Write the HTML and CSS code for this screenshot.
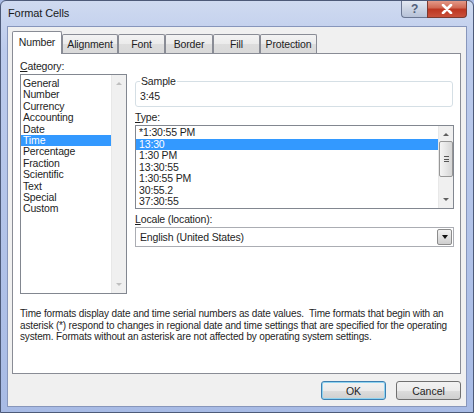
FILE: index.html
```html
<!DOCTYPE html>
<html lang="en">
  <head>
    <meta charset="UTF-8" />
    <title>Format Cells</title>
    <link rel="stylesheet" href="styles.css">
  </head>
  <body>
    <div class="window">
      <div class="titlebar">
        <span class="title">Format Cells</span>
        <div class="caption-btns">
          <div class="cap-btn help">?</div>
          <div class="cap-btn close">
            <svg width="12" height="10" viewBox="0 0 12 10">
              <path d="M2 1 L10 9 M10 1 L2 9" stroke="#fff" stroke-width="2.6" stroke-linecap="round" />
            </svg>
          </div>
        </div>
      </div>

      <div class="client">
        <div class="tabs">
          <div class="tab active" style="width: 50px">Number</div>
          <div class="tab" style="width: 56px">Alignment</div>
          <div class="tab" style="width: 47px">Font</div>
          <div class="tab" style="width: 48px">Border</div>
          <div class="tab" style="width: 47px">Fill</div>
          <div class="tab" style="width: 57px">Protection</div>
        </div>

        <div class="panel">
          <div class="columns">
            <div class="left-col">
              <div class="label"><u>C</u>ategory:</div>
              <div class="listbox category-list">
                <div class="items">
                  <div class="item">General</div>
                  <div class="item">Number</div>
                  <div class="item">Currency</div>
                  <div class="item">Accounting</div>
                  <div class="item">Date</div>
                  <div class="item selected">Time</div>
                  <div class="item">Percentage</div>
                  <div class="item">Fraction</div>
                  <div class="item">Scientific</div>
                  <div class="item">Text</div>
                  <div class="item">Special</div>
                  <div class="item">Custom</div>
                </div>
                <div class="scrollbar disabled">
                  <span class="arrow up"></span>
                  <span class="arrow down"></span>
                </div>
              </div>
            </div>

            <div class="right-col">
              <fieldset class="sample">
                <legend>Sample</legend>
                <div class="sample-value">3:45</div>
              </fieldset>

              <div class="label type-label"><u>T</u>ype:</div>
              <div class="listbox type-list">
                <div class="items">
                  <div class="item">*1:30:55 PM</div>
                  <div class="item selected">13:30</div>
                  <div class="item">1:30 PM</div>
                  <div class="item">13:30:55</div>
                  <div class="item">1:30:55 PM</div>
                  <div class="item">30:55.2</div>
                  <div class="item">37:30:55</div>
                </div>
                <div class="scrollbar">
                  <span class="arrow up"></span>
                  <div class="thumb">
                    <span class="grip"></span>
                  </div>
                  <span class="arrow down"></span>
                </div>
              </div>

              <div class="label locale-label"><u>L</u>ocale (location):</div>
              <div class="combo">
                <span class="combo-text">English (United States)</span>
                <span class="combo-btn"><span class="arrow down dark"></span></span>
              </div>
            </div>
          </div>

          <div class="description">
            Time formats display date and time serial numbers as date values.&nbsp; Time formats that begin with an<br />
            asterisk (*) respond to changes in regional date and time settings that are specified for the operating<br />
            system. Formats without an asterisk are not affected by operating system settings.
          </div>
        </div>

        <div class="buttons">
          <button class="btn default">OK</button>
          <button class="btn">Cancel</button>
        </div>
      </div>
    </div>
  </body>
</html>
```

FILE: styles.css
```css
* {
  box-sizing: border-box;
}

body {
  margin: 0;
  font-family: "Liberation Sans", Arial, sans-serif;
  font-size: 10.5px;
  letter-spacing: -0.15px;
  color: #1e1e1e;
  background: #a9bbe4;
}

.window {
  width: 474px;
  height: 413px;
  background: linear-gradient(180deg, #cfdaf0 0%, #bccbec 12%, #a8bbe5 100%);
  border: 1px solid #4d5a78;
  border-radius: 6px 6px 0 0;
  overflow: hidden;
}

.titlebar {
  height: 25px;
  display: flex;
  align-items: flex-start;
  padding-left: 7px;
}

.title {
  font-size: 11px;
  letter-spacing: -0.1px;
  color: #1a1a1a;
  margin-top: 6px;
}

.caption-btns {
  margin-left: auto;
  margin-right: 6px;
  display: flex;
  margin-top: -1px;
}

.cap-btn {
  height: 18px;
  display: flex;
  align-items: center;
  justify-content: center;
  border: 1px solid #6a7691;
  border-top: none;
}

.help {
  width: 26px;
  border-radius: 0 0 0 4px;
  background: linear-gradient(180deg, #e6ebf4 0%, #cdd5e4 50%, #b7c2d8 100%);
  color: #53607a;
  font-weight: bold;
  font-size: 12px;
  border-right: none;
}

.close {
  width: 40px;
  border-radius: 0 0 4px 0;
  background: linear-gradient(180deg, #e7a08f 0%, #d16a55 45%, #bd3722 55%, #c9513c 100%);
  border-color: #7b3a30;
}

.client {
  margin: 0 6px;
  height: 381px;
  background: #f0f0f0;
  border: 1px solid #8796bb;
  padding: 4px 5px 0 4px;
}

.tabs {
  display: flex;
  align-items: flex-end;
  height: 22px;
  position: relative;
  z-index: 1;
}

.tab {
  height: 19px;
  border: 1px solid #898c95;
  border-bottom: none;
  background: linear-gradient(180deg, #f3f3f3 0%, #ebebeb 50%, #dddddd 51%, #d9d9d9 100%);
  display: flex;
  align-items: center;
  justify-content: center;
  padding-bottom: 1px;
  border-radius: 2px 2px 0 0;
}

.tab.active {
  height: 23px;
  background: #fff;
  margin-bottom: -1px;
  padding-bottom: 2px;
}

.panel {
  height: 321px;
  background: #fff;
  border: 1px solid #898c95;
  padding: 6px 6px 0 7px;
}

.columns {
  display: flex;
  gap: 8px;
}

.left-col {
  width: 107px;
}

.right-col {
  flex: 1;
  padding-top: 15px;
}

.label {
  height: 13px;
  line-height: 13px;
  margin-bottom: 1px;
}

.listbox {
  display: flex;
  border: 1px solid #828790;
  background: #fff;
}

.category-list {
  height: 220px;
}

.type-list {
  height: 84px;
}

.items {
  flex: 1;
  padding-top: 3px;
}

.item {
  height: 11.4px;
  line-height: 11.4px;
  padding-left: 2px;
  white-space: nowrap;
}

.type-list .items {
  padding-top: 1px;
}

.type-list .item {
  height: 11.5px;
  line-height: 11.5px;
  padding-left: 3px;
}

.item.selected {
  background: #3399ff;
  color: #fff;
}

.scrollbar {
  width: 15px;
  background: #f0f0f0;
  border-left: 1px solid #e8e8e8;
  display: flex;
  flex-direction: column;
  align-items: center;
  padding: 7px 0;
}

.arrow {
  width: 0;
  height: 0;
  border-left: 3px solid transparent;
  border-right: 3px solid transparent;
}

.arrow.up {
  border-bottom: 3px solid #606060;
}

.arrow.down {
  border-top: 3px solid #606060;
  margin-top: auto;
}

.scrollbar.disabled .arrow.up {
  border-bottom-color: #bfbfbf;
}

.scrollbar.disabled .arrow.down {
  border-top-color: #bfbfbf;
}

.thumb {
  width: 14px;
  height: 36px;
  margin-top: 5px;
  border: 1px solid #979797;
  border-radius: 2px;
  background: linear-gradient(90deg, #f4f4f4 0%, #e6e6e6 50%, #d6d6d6 100%);
  display: flex;
  align-items: center;
  justify-content: center;
}

.grip {
  width: 5px;
  height: 6px;
  border-top: 1px solid #555;
  border-bottom: 1px solid #555;
  position: relative;
}

.grip::after {
  content: "";
  position: absolute;
  left: 0;
  right: 0;
  top: 1.5px;
  border-top: 1px solid #555;
}

.sample {
  margin: 0 1px 0 0;
  padding: 3px 4px 2px 4px;
  border: 1px solid #d5dfe5;
  border-radius: 3px;
  height: 32px;
}

.sample legend {
  padding: 0 1px;
  margin-left: 0;
  line-height: 12px;
}

.sample-value {
  line-height: 12px;
}

.type-label {
  margin-top: 4px;
}

.locale-label {
  margin-top: 4px;
}

.combo {
  height: 20px;
  border: 1px solid #abadb3;
  display: flex;
  align-items: center;
  padding: 1px;
}

.combo-text {
  flex: 1;
  padding-left: 3px;
}

.combo-btn {
  width: 15px;
  height: 16px;
  border: 1px solid #8c8c8c;
  border-radius: 2px;
  background: linear-gradient(180deg, #f2f2f2 0%, #e0e0e0 50%, #cfcfcf 100%);
  display: flex;
  align-items: center;
  justify-content: center;
}

.arrow.down.dark {
  margin-top: 0;
  border-left-width: 3.5px;
  border-right-width: 3.5px;
  border-top: 4px solid #111;
}

.description {
  margin-top: 14px;
  font-size: 10px;
  line-height: 11.6px;
  white-space: nowrap;
}

.buttons {
  display: flex;
  justify-content: flex-end;
  gap: 10px;
  margin-top: 7px;
}

.btn {
  width: 65px;
  height: 19px;
  font-family: "Liberation Sans", Arial, sans-serif;
  font-size: 10.5px;
  color: #1e1e1e;
  border: 1px solid #707070;
  border-radius: 3px;
  background: linear-gradient(180deg, #f2f2f2 0%, #ebebeb 50%, #dddddd 51%, #cfcfcf 100%);
  padding: 0;
}

.btn.default {
  border-color: #3c7fb1;
  box-shadow: inset 0 0 0 1px #8fd3f0;
}
```
